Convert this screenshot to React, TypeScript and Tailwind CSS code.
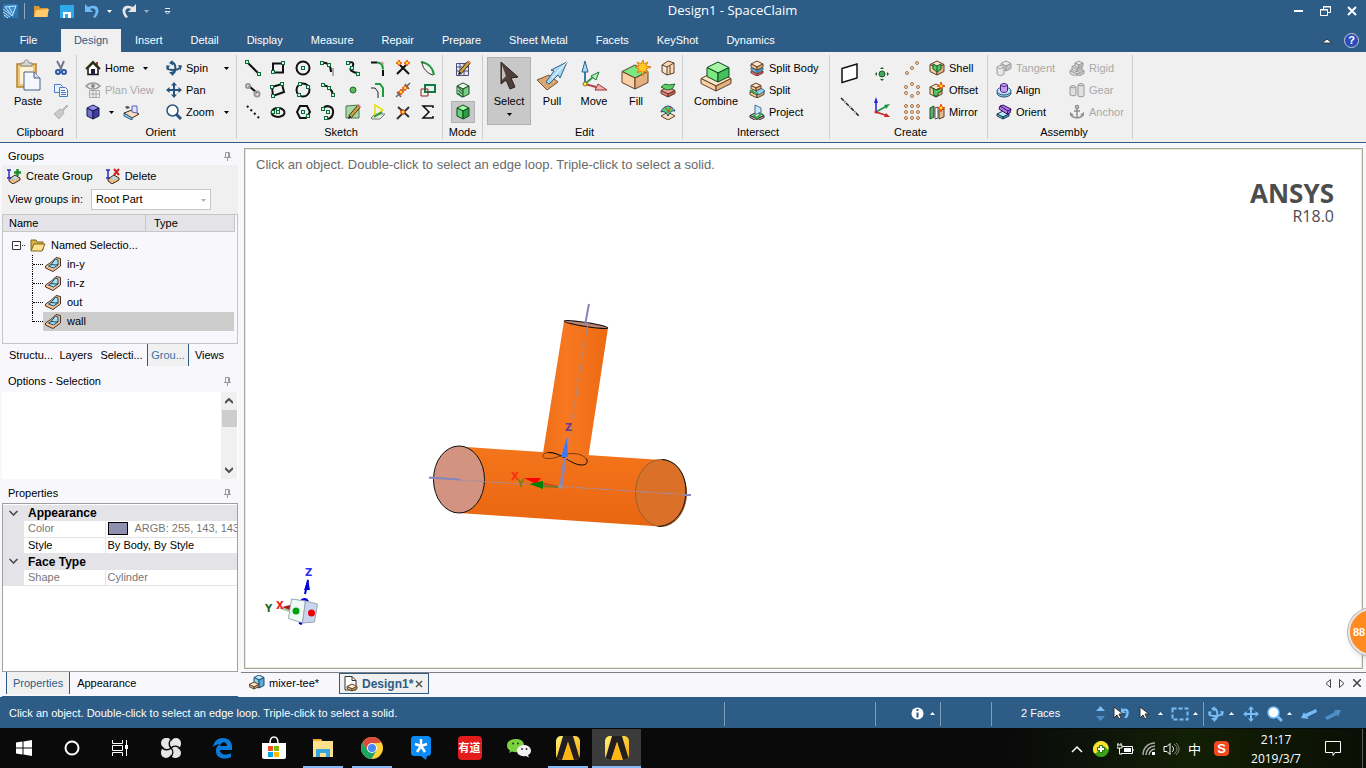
import React, { useState } from 'react';

interface ChildrenProps {
  children?: React.ReactNode;
}

interface SvgProps extends ChildrenProps {
  w?: number;
  h?: number;
  className?: string;
}

const Svg: React.FC<SvgProps> = ({ w = 16, h = 16, className = '', children }) => (
  <svg width={w} height={h} viewBox={`0 0 ${w} ${h}`} fill="none" className={`shrink-0 ${className}`} aria-hidden="true">
    {children}
  </svg>
);

interface CubeProps {
  x: number;
  y: number;
  a: number;
  h: number;
  top: string;
  left: string;
  right: string;
  line?: string;
}

// isometric block, a = half width
const Cube: React.FC<CubeProps> = ({ x, y, a, h, top, left, right, line = '#5b4029' }) => {
  const b = a / 2;
  return (
    <g stroke={line} strokeWidth="1" strokeLinejoin="round">
      <polygon fill={top} points={`${x + a},${y} ${x + 2 * a},${y + b} ${x + a},${y + 2 * b} ${x},${y + b}`} />
      <polygon fill={left} points={`${x},${y + b} ${x + a},${y + 2 * b} ${x + a},${y + 2 * b + h} ${x},${y + b + h}`} />
      <polygon fill={right} points={`${x + 2 * a},${y + b} ${x + a},${y + 2 * b} ${x + a},${y + 2 * b + h} ${x + 2 * a},${y + b + h}`} />
    </g>
  );
};

const tan = { top: '#fde3c6', left: '#fbd0a4', right: '#e3b07e' };
const green = { top: '#a6f5a6', left: '#7be883', right: '#43bf5c' };
const red = { top: '#f7a0a0', left: '#ef7c7c', right: '#cf5555' };
const blue = { top: '#bfe8fb', left: '#8fd0f0', right: '#5aa9d6' };
const grey = { top: '#eeeeee', left: '#dcdcdc', right: '#c4c4c4' };

const Caret: React.FC<{ up?: boolean; className?: string }> = ({ up, className = 'text-black' }) => (
  <svg width="5" height="3" viewBox="0 0 5 3" className={`shrink-0 ${className}`} aria-hidden="true">
    <path d={up ? 'M0 3h5L2.500 0z' : 'M0 0h5L2.500 3z'} fill="currentColor" />
  </svg>
);

const Pencil = () => (
  <g>
    <path d="M4 11.500 12.500 1.500l2.500 2-8.500 10z" fill="#c9a23f" stroke="#4a3714" strokeWidth="1" />
    <path d="m4 11.500 2.500 2L3 15z" fill="#222" />
    <path d="m12 1.500 1.500-1L16 2.500l-1 1.500z" fill="#d77" />
  </g>
);

const Spark: React.FC<{ x: number; y: number; r?: number }> = ({ x, y, r = 3 }) => (
  <g transform={`translate(${x} ${y})`}>
    <path d={`M0 ${-r}L1 -1L${r} 0L1 1L0 ${r}L-1 1L${-r} 0L-1 -1Z`} fill="#ffdf20" stroke="#ee4a10" strokeWidth="1" />
  </g>
);

const SpinIcon: React.FC<{ color?: string }> = ({ color = '#27547c' }) => (
  <Svg>
    <path d="M5 2.500c5-1 6 9 1.500 11.500M1 8c2 2.500 9 3 13 0" stroke={color} strokeWidth="2" />
    <path d="M6.500 0 3 3l4 2.500zM3 12.500l5-1.500-1 5zM0 5.500h4L1 10.500zM12 5l4 .5-1.500 5z" fill={color} />
  </Svg>
);

const PanIcon: React.FC<{ color?: string }> = ({ color = '#27547c' }) => (
  <Svg>
    <path d="M8 2v12M2 8h12" stroke={color} strokeWidth="2" />
    <path d="m8 0 3 3.500H5zM8 16l3-3.500H5zM0 8l3.500-3v6zM16 8l-3.500-3v6z" fill={color} />
  </Svg>
);

const ZoomIcon: React.FC<{ color?: string; fill?: string }> = ({ color = '#27547c', fill = '#fff' }) => (
  <Svg>
    <path d="m10 10 5 5" stroke={color} strokeWidth="3" />
    <circle cx="6.500" cy="6.500" r="5.500" fill={fill} stroke={color} strokeWidth="1.500" />
  </Svg>
);

const FacePlate = () => (
  <g strokeLinejoin="round">
    <path d="m.5 9 6-4L11 .5l4.500 1V9L8 14.500.5 11z" fill="#f0c296" stroke="#4a3423" />
    <path d="M6 7.500 10.500 2l2.500 1v5l-4.500 3L3.500 9z" fill="#a9e0f8" stroke="#1d4a63" />
    <path d="m6 7.500 5 .5 2-.5" stroke="#1d4a63" />
  </g>
);

const Pin = () => (
  <Svg w={9} h={9} className="text-[#9a9a9a]">
    <path d="M2.500.5h4v5h-4zM5.500.5v5M1 5.500h7M4.500 6v3" stroke="currentColor" />
  </Svg>
);

/* ---------- ribbon building blocks ---------- */

const RibbonGroup: React.FC<{ title: string; width: string; children: React.ReactNode }> = ({ title, width, children }) => (
  <section aria-label={title} className={`${width} my-[3px] flex shrink-0 flex-col border-r border-[#cdcdcd] pt-0.5`}>
    <div className="flex h-[68px]">{children}</div>
    <h2 className="text-center leading-[14px]">{title}</h2>
  </section>
);

interface CommandProps {
  icon: React.ReactNode;
  label: string;
  disabled?: boolean;
  menu?: boolean;
}

const Command: React.FC<CommandProps> = ({ icon, label, disabled, menu }) => (
  <button disabled={disabled} className="flex h-[22px] items-center gap-1 whitespace-nowrap text-left disabled:text-[#a9a9a9]">
    {icon}
    <span className={menu ? 'min-w-[34px]' : ''}>{label}</span>
    {menu && <Caret />}
  </button>
);

const IconButton: React.FC<{ label: string; className?: string; children: React.ReactNode }> = ({ label, className = 'h-[22px]', children }) => (
  <button aria-label={label} className={`flex items-center justify-center ${className}`}>{children}</button>
);

const BigCommand: React.FC<{ label: string; width?: string; active?: boolean; children: React.ReactNode }> = ({ label, width = 'w-[42px]', active, children }) => (
  <button className={`${width} flex h-[68px] flex-col items-center border pt-px ${active ? 'border-[#b0b0b0] bg-[#c8c8c8]' : 'border-transparent'}`}>
    <span className="flex h-[34px] items-center">{children}</span>
    <span className="leading-4">{label}</span>
    {active && <Caret className="mt-1 text-black" />}
  </button>
);

/* ---------- sketch tools ---------- */

interface SketchTool {
  name: string;
  d?: string;
  dots?: number[][];
  extra?: React.ReactNode;
}

const sketchTools: SketchTool[] = [
  { name: 'Line', d: 'M2 2l12 12', dots: [[2, 2], [14, 14]] },
  { name: 'Rectangle', d: 'M3 3.500h10v9H3z', dots: [[3, 12], [13, 3]] },
  { name: 'Circle', d: 'M8 1.500a6.500 6.500 0 1 1 0 13a6.500 6.500 0 1 1 0-13', dots: [[8, 8]] },
  { name: 'Tangent Arc', d: 'M2 3c6-1 9 3 9 9', dots: [[2, 3], [9, 5]], extra: <path d="M13 8v8" stroke="#aaa" strokeWidth="2" /> },
  { name: 'Spline', d: 'M3 3c8-3 5 4 3 5s1 5 8 5', dots: [[3, 3], [7, 8], [13, 14]] },
  { name: 'Create Rounded Corner', extra: <g strokeWidth="2"><path d="M1 2.500h6" stroke="#111" /><path d="M7 2.500c5 0 6 3 6 7" stroke="#1e9a3a" /><path d="M13 10v6" stroke="#111" /><path d="m11 2 3 2" stroke="#d9a0a0" /></g> },
  { name: 'Trim Away', d: 'M2 14l6-6 6 6M5 5l3 3 3-3', extra: <g><Spark x={4} y={3} /><Spark x={12} y={3} /></g> },
  { name: 'Project to Sketch', extra: <g><path d="M1 2c7 1 12 6 13 13" stroke="#1e9a3a" strokeWidth="2" /><path d="M2 2c0 6 6 12 11 13" stroke="#333" /></g> },
  { name: 'Tangent Line', d: 'M4 4l8 7', extra: <g stroke="#999" strokeWidth="2"><circle cx="3" cy="4" r="2" /><circle cx="12" cy="12" r="2.500" /></g> },
  { name: 'Three-Point Rectangle', d: 'M2 5l10-3 2 8-11 4z', dots: [[2, 5], [12, 2], [3, 14]] },
  { name: 'Three-Point Circle', d: 'M8 1.500a6.500 6.500 0 1 1 0 13a6.500 6.500 0 1 1 0-13', dots: [[5, 2], [13, 5], [4, 13]] },
  { name: 'Three-Point Arc', d: 'M3 3c6 1 9 5 10 10', dots: [[3, 3], [9, 6], [13, 13]] },
  { name: 'Point', extra: <circle cx="8" cy="8" r="3" fill="#5cb85c" stroke="#176b2a" /> },
  { name: 'Offset Curve', extra: <g><path d="M5 2h5l3 4v9" stroke="#1e9a3a" strokeWidth="2" /><path d="M1 6h4l3 4v6" stroke="#222" /></g> },
  { name: 'Split Curve', extra: <g><path d="m1 15 14-14M2 10l4 5M10 2l4 5" stroke="#666" strokeWidth="1.500" /><Spark x={6} y={10} /><Spark x={10} y={6} /></g> },
  { name: 'Scale', extra: <g><path d="M5 3h10v7H5z" stroke="#0f7a43" strokeWidth="2" /><path d="M1 7h7v7H1z" stroke="#8c2222" /></g> },
  { name: 'Construction Line', extra: <path d="m2 2 13 13" stroke="#111" strokeWidth="2" strokeDasharray="2 3" /> },
  { name: 'Ellipse', d: 'M8 4a6.500 4.500 0 1 1 0 9a6.500 4.500 0 1 1 0-9', dots: [[8, 8], [3, 8], [8, 5]] },
  { name: 'Polygon', d: 'M5 2h7l3 6-4 6H5L2 8z', dots: [[8, 8], [13, 12]] },
  { name: 'Sweep Arc', d: 'M3 5C6 0 14 2 13 9s-7 6-8 5', dots: [[3, 5], [8, 8], [6, 14]] },
  { name: 'Face Curve', extra: <g><path d="m1 2 13-1v13H1z" fill="#a8d8a8" stroke="#4d7a4d" /><Pencil /></g> },
  { name: 'Fold Sketch', extra: <g><path d="m1 14 4-4h10l-5 5H2z" fill="#e3f0e3" stroke="#777" /><path d="M5 1v11l8-6z" stroke="#e4e000" strokeWidth="1.500" /><path d="m4 13 8-5" stroke="#1e9a3a" strokeWidth="2" /></g> },
  { name: 'Create Corner', extra: <g><path d="m2 15 12-12M3 3l11 10" stroke="#333" strokeWidth="2" /><Spark x={8} y={8} /></g> },
  { name: 'Equations', d: 'M13 4V2H3l6 6-6 6h10v-2' },
];

const SketchIcon: React.FC<{ tool: SketchTool }> = ({ tool }) => (
  <Svg>
    {tool.d && <path d={tool.d} stroke="#111" strokeWidth={tool.name === 'Equations' ? 1.5 : 2} />}
    {tool.extra}
    {tool.dots?.map(([x, y]) => (
      <rect key={`${x}-${y}`} x={x - 1.5} y={y - 1.5} width="3" height="3" fill="#d6f5df" stroke="#0a6b3b" />
    ))}
  </Svg>
);

/* ---------- header ---------- */

const menuTabs = ['Insert', 'Detail', 'Display', 'Measure', 'Repair', 'Prepare', 'Sheet Metal', 'Facets', 'KeyShot', 'Dynamics'];

const Header = () => (
  <header className="h-[52px] shrink-0 bg-[#2d5c87] text-white">
    <div className="flex h-[22px] items-center">
      <div className="flex items-center pl-[3px]">
        <Svg w={17} h={16}>
          <path d="M0 1h15v14H0z" fill="#2f74ad" />
          <path d="M1 3c5-2 10-1 13-1l-4 13c-2-5-5-8-9-10z" fill="#3f8ccc" />
          <path d="m2 4 11-1-4 10zM6 4l3 6M0 9l7 5M1 12l4 3M0 6l8 6" stroke="#bfe4ff" />
        </Svg>
        <span className="ml-1 h-4 w-px bg-[#8fa9c0]" />
        <IconButton label="Open" className="ml-2">
          <Svg w={17}>
            <path d="M1 3h5l1 2h8v9H1z" fill="#d9962f" />
            <path d="m3 7 13-1-2 8H1z" fill="#ffcb6b" />
          </Svg>
        </IconButton>
        <IconButton label="Save" className="ml-[9px]">
          <Svg>
            <path d="M1 2h14v13H1z" fill="#2eaae8" />
            <path d="M4 9h8v6H4z" fill="#fff" />
            <path d="M6 11h3v4H6z" fill="#2eaae8" />
          </Svg>
        </IconButton>
        <IconButton label="Undo" className="ml-[9px]">
          <Svg>
            <path d="M1 1v8h8L6 6c4-2 7 1 5 5l-2 3 2 1c6-6 4-14-4-12L4 4z" fill="#6fbaf5" />
          </Svg>
        </IconButton>
        <Caret className="ml-[7px] text-white" />
        <IconButton label="Redo" className="ml-[9px]">
          <Svg>
            <path d="M15 1v8H7l3-3C6 4 3 7 5 11l2 3-2 1C-1 9 1 1 9 3l3 1z" fill="#e6e6e6" />
          </Svg>
        </IconButton>
        <Caret className="ml-[7px] text-[#9db2c6]" />
        <Svg w={7} h={7} className="ml-[15px]">
          <path d="M1 .5h5M1 3.500h5L3.500 6z" stroke="#dfe7ee" />
        </Svg>
      </div>
      <h1 className="flex-1 text-center font-['Open_Sans',sans-serif] text-[13px]">Design1 - SpaceClaim</h1>
      <div className="flex items-center justify-end gap-4 pr-[9px]">
        <IconButton label="Minimize"><Svg w={10} h={12}><path d="M0 6h9" stroke="#fff" strokeWidth="2" /></Svg></IconButton>
        <IconButton label="Restore"><Svg w={11} h={12}><path d="M.5 4.500h7v6h-7zM3.500 4V1.500h7v6H8" stroke="#fff" /><path d="M0 5h8M3 2h8" stroke="#fff" /></Svg></IconButton>
        <IconButton label="Close"><Svg w={10} h={10}><path d="m1 1 8 8M9 1 1 9" stroke="#fff" strokeWidth="2" /></Svg></IconButton>
      </div>
    </div>
    <nav className="mt-[7px] flex h-[23px] items-center">
      <button className="h-full w-[61px] pr-1 text-center">File</button>
      <button className="h-full w-[60px] bg-[#f0f0f0] text-[#2d5c87]">Design</button>
      {menuTabs.map(tab => (
        <button key={tab} className="h-full px-[14px]">{tab}</button>
      ))}
      <IconButton label="Collapse ribbon" className="ml-auto">
        <Svg w={10} h={6}><path d="m0 5 5-4 5 4z" fill="#fff" stroke="#333" /></Svg>
      </IconButton>
      <IconButton label="Help" className="ml-3 mr-[7px]">
        <span className="flex size-[15px] items-center justify-center rounded-full border border-[#c7ccd6] bg-[#2b4cb8] text-[11px] font-bold leading-none">?</span>
      </IconButton>
    </nav>
  </header>
);

/* ---------- ribbon ---------- */

const Ribbon = () => (
  <div className="flex h-[91px] shrink-0 overflow-hidden border-b border-[#2d5c87] bg-[#f0f0f0]">
    <RibbonGroup title="Clipboard" width="w-[77px] pl-1">
      <BigCommand label="Paste" width="w-12">
        <Svg w={28} h={34}>
          <path d="M3 5h19v23H3z" fill="#f0c777" stroke="#b3832f" strokeWidth="1.500" />
          <path d="M6 8h13v17H6z" fill="#fff2d2" />
          <path d="M7 7V4h3c0-4 5-4 5 0h3v3z" fill="#d6d6d6" stroke="#888" />
          <path d="M9 13h10l6 6v12H9z" fill="#f4f7fd" stroke="#4a5f8a" transform="translate(1 0)" />
          <path d="M20 13v6h6" fill="#cfdcf2" stroke="#4a5f8a" />
        </Svg>
      </BigCommand>
      <div className="flex w-[18px] flex-col">
        <IconButton label="Cut">
          <Svg>
            <path d="m4 1 5 9M11 1 7 10" stroke="#6f7a8c" strokeWidth="2" />
            <circle cx="5" cy="12" r="2" stroke="#2857a8" strokeWidth="2" />
            <circle cx="11" cy="12" r="2" stroke="#2857a8" strokeWidth="2" />
          </Svg>
        </IconButton>
        <IconButton label="Copy">
          <Svg>
            <path d="M1.500 2.500h6l2 2v6h-8z" fill="#eaf2ff" stroke="#4a79c9" />
            <path d="M6.500 5.500h6l2 2v7h-8zM8 8.500h4M8 10.500h5M8 12.500h5" fill="#eaf2ff" stroke="#4a79c9" />
          </Svg>
        </IconButton>
        <IconButton label="Format painter">
          <Svg><path d="m14 1-5 5-2-1-6 5 5 5 5-6-1-2 5-5z" fill="#c9c9c9" stroke="#b2b2b2" /></Svg>
        </IconButton>
      </div>
    </RibbonGroup>

    <RibbonGroup title="Orient" width="w-[160px] pl-2">
      <div className="w-[81px]">
        <Command menu label="Home" icon={
          <Svg>
            <path d="M11 2h2v4h-2z" fill="#a33" />
            <path d="M3 8v6.500h10V8L8 3z" fill="#fff" stroke="#111" strokeWidth="1.500" />
            <path d="m1 9 7-7 7 7" stroke="#332f10" strokeWidth="2" />
            <path d="M6 9h4v6H6z" fill="#20203a" />
          </Svg>
        } />
        <Command disabled label="Plan View" icon={
          <Svg>
            <path d="M1 4c4-4 10-4 14 0-4 4-10 4-14 0z" stroke="#999" strokeWidth="1.500" />
            <circle cx="8" cy="4" r="2" fill="#888" />
            <path d="M4.500 8.500h10v7h-10zM8 8v7M11 8v7M4 12h10" stroke="#aaa" />
          </Svg>
        } />
        <div className="flex h-[22px] items-center">
          <IconButton label="View mode"><Svg><Cube x={2} y={1} a={6} h={8} top="#8f8fe8" left="#7070d0" right="#3e3e9c" line="#1a1a4a" /></Svg></IconButton>
          <Caret className="ml-2 text-black" />
          <IconButton label="Snap view" className="ml-2">
            <Svg w={18}>
              <path d="m2 9 8-3 7 4-7 4z" fill="#fbdcb8" stroke="#3b2a1a" />
              <path d="m2 9 8 5v2l-8-4z" fill="#8fd0f0" stroke="#2c5b78" />
              <path d="M10 2h5v7l-5-1z" fill="#dfe2ff" stroke="#5a60c0" />
              <path d="M3 3c2-2 4-1 5 1l-3 1z" fill="#555" />
            </Svg>
          </IconButton>
        </div>
      </div>
      <div>
        <Command menu label="Spin" icon={<SpinIcon />} />
        <Command label="Pan" icon={<PanIcon />} />
        <Command menu label="Zoom" icon={<ZoomIcon />} />
      </div>
    </RibbonGroup>

    <RibbonGroup title="Sketch" width="w-[206px] pl-[3px]">
      <div className="grid h-[66px] w-[200px] grid-cols-8">
        {sketchTools.map(tool => (
          <IconButton key={tool.name} label={tool.name}><SketchIcon tool={tool} /></IconButton>
        ))}
      </div>
    </RibbonGroup>

    <RibbonGroup title="Mode" width="w-10">
      <div className="flex w-full flex-col items-center">
        <IconButton label="Sketch mode">
          <Svg>
            <path d="M1.500 3.500h12v12h-12zM5 3v12M9 3v12M1 7h12M1 11h12" fill="#e8e8f4" stroke="#4c4c78" />
            <Pencil />
          </Svg>
        </IconButton>
        <IconButton label="Section mode">
          <Svg>
            <Cube x={2} y={1} a={6} h={8} top="#eafbea" left="#f7fff7" right="#7ccf86" line="#1a4d24" />
            <path d="m3 8 4 4M3 11l4 4M3 5l5 5" stroke="#1d7a30" strokeWidth="1.500" />
          </Svg>
        </IconButton>
        <IconButton label="3D mode" className="h-[22px] w-6 border border-[#b0b0b0] bg-[#c8c8c8]">
          <Svg><Cube x={2} y={1} a={6} h={8} top="#a6f5a6" left="#62d672" right="#2f9c48" line="#0e4a1c" /></Svg>
        </IconButton>
      </div>
    </RibbonGroup>

    <RibbonGroup title="Edit" width="w-[200px] pl-1">
      <BigCommand active label="Select" width="w-11">
        <Svg w={28} h={32}>
          <path d="M6 2v22l5-4 4 9 5-2-4-9 7-1z" fill="#4e403a" stroke="#2a1f1b" />
          <path d="M7 5v15l4-4z" fill="#c9bdb8" />
        </Svg>
      </BigCommand>
      <BigCommand label="Pull">
        <Svg w={32} h={32}>
          <path d="m1 20 12-5 9 7-11 8z" fill="#d9a673" stroke="#7a5430" />
          <path d="m10 22 8-11-3-1L31 2l-7 16-2-3-9 9z" fill="#a9d8f5" stroke="#2f6288" />
          <path d="M31 2 16 18" stroke="#fff" />
        </Svg>
      </BigCommand>
      <BigCommand label="Move">
        <Svg w={28} h={32}>
          <path d="M5 24V8" stroke="#3c7aa6" strokeWidth="2" />
          <path d="m5 1 3 11H2z" fill="#a9d8f5" stroke="#2f6288" />
          <path d="m5 24 8-7" stroke="#2f9c48" strokeWidth="2" />
          <path d="m19 12-3 8-5-4z" fill="#b4f0bb" stroke="#1f7a35" />
          <path d="m5 24 11 3" stroke="#b04444" strokeWidth="2" />
          <path d="m27 30-12 0 3-6z" fill="#f3b0b0" stroke="#963131" />
          <circle cx="5" cy="24" r="2" fill="#ffe667" stroke="#8a7612" />
        </Svg>
      </BigCommand>
      <BigCommand label="Fill">
        <Svg w={30} h={32}>
          <Cube x={1} y={5} a={13} h={11} {...tan} top="#7be883" />
          <path d="m22 0 1 4 4-2-2 4 5 1-5 2 2 4-4-2-1 5-2-5-4 2 2-4-4-2 4-1-2-4 4 2z" fill="#ffc928" stroke="#e07b10" />
        </Svg>
      </BigCommand>
      <div className="flex w-[22px] flex-col items-center">
        <IconButton label="Blend"><Svg><path d="m2 5 6-4 6 2v10l-7 2-5-3zM7 15V7L2 5M7 7l7-4M10 6v8" fill="#f9d9b4" stroke="#5b4029" /></Svg></IconButton>
        <IconButton label="Replace"><Svg><Cube x={1} y={5} a={7} h={3} {...red} /><path d="m1 5 4-3 4 1 6-1-3 5-5 1z" fill="#5fcf6c" stroke="#1f6b2c" /></Svg></IconButton>
        <IconButton label="Tweak"><Svg><path d="m1 12 7-4 7 4-7 4z" fill="#fbdcb8" stroke="#5b4029" /><path d="M1 8c2-6 9-9 14-1-4-1-5 2-7 5-2-4-4-5-7-4z" fill="#5fcf6c" stroke="#173d8c" /><path d="m5 4 5 4M11 3 7 9" stroke="#c33" /></Svg></IconButton>
      </div>
    </RibbonGroup>

    <RibbonGroup title="Intersect" width="w-[147px] pl-1">
      <BigCommand label="Combine" width="w-[58px]">
        <Svg w={32} h={32}>
          <Cube x={1} y={11} a={15} h={5} {...tan} />
          <Cube x={7} y={2} a={11} h={9} {...green} line="#10461c" />
        </Svg>
      </BigCommand>
      <div className="ml-1">
        <Command label="Split Body" icon={<Svg><Cube x={2} y={8} a={6} h={2} {...red} line="#8c3a3a" /><Cube x={2} y={5} a={6} h={2} {...blue} line="#3a7a9c" /><Cube x={2} y={1} a={6} h={3} {...tan} /></Svg>} />
        <Command label="Split" icon={<Svg><Cube x={1} y={6} a={7} h={3} {...tan} /><path d="m7 9 5-3 4 3-6 4z" fill="#8fd0f0" stroke="#2f6288" /><Cube x={2} y={1} a={5} h={3} {...tan} /><path d="m1 8 7 4" stroke="#23b14d" strokeWidth="2" /></Svg>} />
        <Command label="Project" icon={<Svg><Cube x={1} y={8} a={7} h={2} {...tan} line="#1c2440" /><path d="M6 1v10l6-3V4z" fill="#cfe7f7" stroke="#3a6ea0" /><path d="m4 11 4 3 5-5" stroke="#23b14d" strokeWidth="2" /></Svg>} />
      </div>
    </RibbonGroup>

    <RibbonGroup title="Create" width="w-[158px] pl-1">
      <div className="flex w-8 flex-col items-center">
        <IconButton label="Plane" className="h-[34px]"><Svg w={20} h={22}><path d="M2 5.500 17 1v14L2 19.500z" fill="#fff" stroke="#111" strokeWidth="1.500" /></Svg></IconButton>
        <IconButton label="Axis" className="h-8"><Svg w={20} h={20}><path d="m1 1 18 18" stroke="#222" strokeWidth="1.500" strokeDasharray="4 1 1 1" /></Svg></IconButton>
      </div>
      <div className="flex w-8 flex-col items-center">
        <IconButton label="Point" className="h-[34px]"><Svg><circle cx="8" cy="8" r="3" fill="#4ca35c" stroke="#195b28" /><path d="m8 1 2 2H6zM8 15l2-2H6zM1 8l2-2v4zM15 8l-2-2v4z" fill="#195b28" /></Svg></IconButton>
        <IconButton label="Origin" className="h-8">
          <Svg w={18} h={20}>
            <path d="M3 15V4" stroke="#2222dd" strokeWidth="1.500" /><path d="m3 0 2 6H1z" fill="#2222dd" />
            <path d="m3 15 9-5" stroke="#1d9148" strokeWidth="1.500" /><path d="m17 7-4 5-2-4z" fill="#1d9148" />
            <path d="m3 15 9 3" stroke="#c72525" strokeWidth="1.500" /><path d="m17 20-6 0 2-4z" fill="#c72525" />
            <circle cx="3" cy="15" r="1.500" fill="#c72525" />
          </Svg>
        </IconButton>
      </div>
      <div className="flex w-[27px] flex-col items-center">
        <IconButton label="Linear pattern"><Svg><g fill="#fbdcb8" stroke="#a5714a"><circle cx="3" cy="13" r="1.500" /><circle cx="8" cy="8" r="1.500" /><circle cx="13" cy="3" r="1.500" /></g></Svg></IconButton>
        <IconButton label="Circular pattern"><Svg><g fill="#fbdcb8" stroke="#a5714a"><circle cx="8" cy="2" r="1.500" /><circle cx="14" cy="5" r="1.500" /><circle cx="14" cy="11" r="1.500" /><circle cx="8" cy="14" r="1.500" /><circle cx="2" cy="11" r="1.500" /><circle cx="2" cy="5" r="1.500" /></g></Svg></IconButton>
        <IconButton label="Fill pattern">
          <Svg>
            <g fill="#fbdcb8" stroke="#a5714a">
              {[2, 8, 14].map(x => [2, 8, 14].map(y => <circle key={`${x}-${y}`} cx={x} cy={y} r="1.500" />))}
            </g>
          </Svg>
        </IconButton>
      </div>
      <div className="ml-1">
        <Command label="Shell" icon={<Svg><Cube x={1} y={1} a={7} h={7} {...tan} /><path d="m4 4 4 2 4-2v5l-4 3-4-3z" fill="#56c765" stroke="#155a24" /><path d="M8 6v6" stroke="#155a24" /></Svg>} />
        <Command label="Offset" icon={<Svg><Cube x={1} y={2} a={6} h={7} {...tan} /><path d="m4 6 3 2 6-2v3l-4 2v3H5z" fill="#56c765" stroke="#155a24" /><Spark x={12} y={4} r={4} /></Svg>} />
        <Command label="Mirror" icon={<Svg><path d="m1 4 4-2v11l-4 2z" fill="#5fae6b" stroke="#1c4d27" /><path d="m6 4 3-1v11l-3 1z" fill="#fff" stroke="#555" /><path d="m10 6 5-1v8l-5 2z" fill="#e5b88a" stroke="#5b4029" /><Spark x={12} y={4} r={4} /></Svg>} />
      </div>
    </RibbonGroup>

    <RibbonGroup title="Assembly" width="w-[145px] pl-2">
      <div className="w-[73px]">
        <Command disabled label="Tangent" icon={<Svg><Cube x={5} y={1} a={5} h={5} {...grey} line="#9a9a9a" /><path d="M1 7v7c2 2 5 2 7 0V7c-2-2-5-2-7 0zM1 7c2 2 5 2 7 0" fill="#e6e6e6" stroke="#9a9a9a" /></Svg>} />
        <Command label="Align" icon={<Svg><ellipse cx="8" cy="11" rx="7" ry="4" fill="#9fd6f2" stroke="#1f4f70" /><ellipse cx="8" cy="9" rx="7" ry="4" fill="#bfe8fb" stroke="#1f4f70" /><path d="M4.500 3v6c2 2 5 2 7 0V3c-2-2-5-2-7 0zM4.500 3c2 2 5 2 7 0" fill="#c79cf0" stroke="#4b2180" /></Svg>} />
        <Command label="Orient" icon={<Svg><Cube x={1} y={7} a={6} h={2} {...blue} line="#16394f" /><path d="m4 2 3-1 8 4-1 4-3 1-8-5z" fill="#b07ae6" stroke="#32105c" /><path d="m4 2 8 5 3-2M12 7l-1 3" stroke="#32105c" /></Svg>} />
      </div>
      <div>
        <Command disabled label="Rigid" icon={<Svg><Cube x={1} y={7} a={7} h={3} {...grey} line="#999" /><Cube x={3} y={4} a={5} h={3} {...grey} line="#999" /><Cube x={6} y={1} a={4} h={3} {...grey} line="#999" /></Svg>} />
        <Command disabled label="Gear" icon={<Svg><path d="M1 5v8c1 1 5 1 6 0V5c-1-2-5-2-6 0zM1 5c1 1 5 1 6 0M9 3v11c1 1 5 1 6 0V3c-1-2-5-2-6 0zM9 3c1 1 5 1 6 0" fill="#e0e0e0" stroke="#999" /></Svg>} />
        <Command disabled label="Anchor" icon={<Svg><circle cx="8" cy="3" r="1.500" stroke="#8f8f8f" strokeWidth="1.500" /><path d="M8 5v9M5 7h6M2 10c1 5 11 5 12 0" stroke="#8f8f8f" strokeWidth="1.500" /><path d="m1 8 4 3-4 1zM15 8l-4 3 4 1z" fill="#8f8f8f" /></Svg>} />
      </div>
    </RibbonGroup>
  </div>
);

/* ---------- side panels ---------- */

const PanelTitle: React.FC<{ title: string; className?: string }> = ({ title, className = 'h-5' }) => (
  <div className={`${className} flex items-center justify-between pl-1.5 pr-1.5`}>
    <h2>{title}</h2>
    <Pin />
  </div>
);

const GroupIcon: React.FC<{ mark: React.ReactNode }> = ({ mark }) => (
  <Svg>
    <path d="m3 11 6-4 5 3v2l-7 4-4-3z" fill="#e8b98a" stroke="#3d2b1c" />
    <path d="m6 10 3-2 3 2-3 2z" fill="#a9e0f8" />
    <path d="M1 2h4M3 2v8M1 10h4" stroke="#2a2ac0" strokeWidth="1.500" />
    {mark}
  </Svg>
);

const treeItems = ['in-y', 'in-z', 'out', 'wall'];
const panelTabs = ['Structu...', 'Layers', 'Selecti...', 'Grou...', 'Views'];
const panelTabWidths = ['w-[50px]', 'w-10', 'w-[51px]', 'w-[42px]', 'w-[41px]'];

const GroupsPanel = () => {
  const [selected, setSelected] = useState('wall');

  return (
    <section className="pt-1">
      <PanelTitle title="Groups" className="h-[18px]" />
      <div className="h-[49px] bg-[#f0f0f0] pl-1">
        <div className="flex h-[22px] items-center gap-3">
          <button className="flex items-center gap-1">
            <GroupIcon mark={<path d="M11.500 1v7M8 4.500h7" stroke="#1f8a2d" strokeWidth="2.500" />} />
            Create Group
          </button>
          <button className="flex items-center gap-1">
            <GroupIcon mark={<path d="m9 1 5 6M14 1 9 7" stroke="#d02020" strokeWidth="2" />} />
            Delete
          </button>
        </div>
        <div className="flex items-center pl-0.5 pt-0.5">
          <label htmlFor="group-root" className="w-[83px]">View groups in:</label>
          <span className="relative">
            <select id="group-root" className="h-[21px] w-[120px] appearance-none border border-[#c6c6c6] bg-white pl-1 pr-5">
              <option>Root Part</option>
            </select>
            <span className="pointer-events-none absolute right-[5px] top-[10px]"><Caret className="text-[#b5b5b5]" /></span>
          </span>
        </div>
      </div>

      <div className="h-[130px] border border-[#c6c6c6]">
        <div className="mr-0.5 flex h-[17px] items-center border-b border-r border-[#c6c6c6] bg-[#e3e3e8]">
          <span className="w-[143px] border-r border-[#c6c6c6] pl-1.5 leading-4">Name</span>
          <span className="pl-2">Type</span>
        </div>
        <div className="pt-[3px]">
          <div className="flex h-5 items-center pl-[9px]">
            <Svg w={18} h={11}>
              <path d="M.5 1.500h8v8h-8zM2.500 5.500h4" fill="#fff" stroke="#333" />
              <path d="M10 5.500h4" stroke="#333" strokeDasharray="1 1" />
            </Svg>
            <Svg w={16} h={14}>
              <path d="M1 2h5l1 2h6v8H1z" fill="#d8b04a" stroke="#86651c" />
              <path d="m4 6h11l-3 7H1z" fill="#fae28f" stroke="#86651c" />
            </Svg>
            <span className="ml-[5px]">Named Selectio...</span>
          </div>
          <ul className="ml-[29px]">
            {treeItems.map((item, i) => (
              <li key={item} className="flex h-[19px]">
                <span className="flex w-[11px] shrink-0 items-center">
                  <span className={`border-l border-dotted border-black ${i === treeItems.length - 1 ? 'mb-auto h-[10px]' : 'h-full'}`} />
                  <span className="w-full border-t border-dotted border-black" />
                </span>
                <button
                  onClick={() => setSelected(item)}
                  className={`mr-[3px] flex flex-1 items-center gap-[6px] pl-0.5 text-left ${selected === item ? 'bg-[#cccccc]' : ''}`}
                >
                  <Svg><FacePlate /></Svg>
                  {item}
                </button>
              </li>
            ))}
          </ul>
        </div>
      </div>

      <div className="flex h-[22px] items-stretch pl-1">
        {panelTabs.map((tab, i) => (
          <button
            key={tab}
            className={`${panelTabWidths[i]} ${tab === 'Grou...' ? 'border-x border-[#2d5c87] bg-[#f0f0f0] text-[#3b73a6]' : ''}`}
          >
            {tab}
          </button>
        ))}
      </div>
    </section>
  );
};

const OptionsPanel = () => (
  <section className="mt-[5px]">
    <PanelTitle title="Options - Selection" className="h-[21px]" />
    <div className="flex h-[87px] justify-end bg-white pr-px">
      <div className="flex w-4 flex-col items-center bg-[#f0f0f0]">
        <IconButton label="Scroll up" className="h-[18px]"><Svg w={8} h={6}><path d="m0 5 4-4 4 4" stroke="#505050" strokeWidth="2" /></Svg></IconButton>
        <span className="h-[17px] w-[15px] bg-[#cdcdcd]" />
        <IconButton label="Scroll down" className="mt-auto h-[18px]"><Svg w={8} h={6}><path d="m0 1 4 4 4-4" stroke="#505050" strokeWidth="2" /></Svg></IconButton>
      </div>
    </div>
  </section>
);

const SectionRow: React.FC<{ label: string }> = ({ label }) => (
  <tr className="h-4 bg-[#e3e3e8]">
    <td className="p-0"><Svg w={9} h={6} className="mx-auto"><path d="m.5 1 4 4 4-4" stroke="#444" strokeWidth="1.500" /></Svg></td>
    <th colSpan={2} className="p-0 pl-1 text-left text-xs font-bold leading-4">{label}</th>
  </tr>
);

interface PropertyRowProps extends ChildrenProps {
  label: string;
  readOnly?: boolean;
}

const PropertyRow: React.FC<PropertyRowProps> = ({ label, readOnly, children }) => (
  <tr className={`h-4 leading-[15px] ${readOnly ? 'text-[#777]' : ''}`}>
    <td className="bg-[#e3e3e8] p-0" />
    <th className="border-b border-r border-[#e3e3e8] p-0 pl-1 text-left font-normal">{label}</th>
    <td className="overflow-hidden whitespace-nowrap border-b border-[#e3e3e8] p-0 pl-0.5">{children}</td>
  </tr>
);

const PropertiesPanel = () => (
  <section className="mt-1 flex flex-1 flex-col">
    <PanelTitle title="Properties" />
    <div className="flex-1 border border-[#a0a0a0] bg-white pt-px">
      <table className="w-full table-fixed border-collapse">
        <colgroup>
          <col className="w-[21px]" />
          <col className="w-[81px]" />
          <col />
        </colgroup>
        <tbody>
          <SectionRow label="Appearance" />
          <PropertyRow label="Color" readOnly>
            <span className="flex items-center">
              <span className="mr-[7px] h-[13px] w-5 shrink-0 border border-black bg-[#8f8faf]" />ARGB: 255, 143, 143
            </span>
          </PropertyRow>
          <PropertyRow label="Style">By Body, By Style</PropertyRow>
          <SectionRow label="Face Type" />
          <PropertyRow label="Shape" readOnly>Cylinder</PropertyRow>
        </tbody>
      </table>
    </div>
    <div className="flex h-[25px] items-stretch border-b border-[#2d5c87] pb-0.5 pl-1">
      <button className="border-x border-[#2d5c87] bg-[#f0f0f0] px-1.5 text-[#2d5c87]">Properties</button>
      <button className="px-[7px]">Appearance</button>
    </div>
  </section>
);

/* ---------- 3D view ---------- */

const TeeModel = () => (
  <svg className="absolute left-[180px] top-[151px]" width="270" height="235" viewBox="425 300 270 235" fill="none" aria-label="Mixing tee">
    <defs>
      <linearGradient id="branch" x1="0" x2="1" y1="0" y2="0">
        <stop offset="0" stopColor="#ef6f17" />
        <stop offset="0.35" stopColor="#f87822" />
        <stop offset="1" stopColor="#ec6a12" />
      </linearGradient>
      <linearGradient id="pipe" x1="0" x2="0" y1="0" y2="1">
        <stop offset="0" stopColor="#f4751c" />
        <stop offset="1" stopColor="#e96611" />
      </linearGradient>
    </defs>
    <path d="m459 446.500 203 13.500c16 0 24 16 24 32s-9 34-26 34.500l-201-13.500z" fill="url(#pipe)" />
    <path d="m564 321 44 7-20 131-2 6-43-12z" fill="url(#branch)" />
    <ellipse cx="459" cy="479.500" rx="25.500" ry="33.500" fill="#d39381" stroke="#111" />
    <ellipse cx="661" cy="493" rx="25.500" ry="33.500" fill="#db7028" stroke="#96602f" />
    <path d="M662 459.500c33 2 32 65-4 67" stroke="#111" />
    <ellipse cx="586" cy="324.500" rx="22" ry="2" transform="rotate(9 586 324.500)" fill="#c08572" stroke="#111" />
    <path d="M562 457c-7-5-17-6-19-2s8 5 17 1c12-5 24-2 27 4" stroke="#7a3c12" />
    <path d="M548 452.500c13-1 23 13 34 12.500 5 0 6-3 4.500-6" stroke="#111" />
    <path d="m429 478 262 17" stroke="#a58c9c" strokeWidth="1" strokeDasharray="14 2 3 2" />
    <path d="m429 477.500 31 2M684 495h7" stroke="#8585c0" strokeWidth="2" />
    <path d="m588 322-27 165" stroke="#a58c8c" strokeDasharray="14 2 3 2" />
    <path d="m589 304-4 21" stroke="#8585c0" strokeWidth="2" />
    <path d="m561 486 4-28" stroke="#8a85b8" strokeWidth="3" />
    <path d="m567 437-6 20h7z" fill="#3f78f5" />
    <path d="m559 487-22-5" stroke="#d94420" strokeWidth="2" />
    <path d="m524 478 17 0-5 6z" fill="#f00" />
    <path d="m559 487-18-1" stroke="#777a20" strokeWidth="2" />
    <path d="m529 484 14-3v8z" fill="#00820a" />
    <circle cx="560" cy="487" r="2" fill="#8b9b9b" />
    <g className="font-['DejaVu_Sans',sans-serif] text-[10px] font-bold">
      <text x="511" y="480" fill="#ff3010">X</text>
      <text x="517" y="487" fill="#7f7f10">Y</text>
      <text x="565" y="431" fill="#6b3a8a">Z</text>
    </g>
  </svg>
);

const Triad = () => (
  <svg className="absolute bottom-[39px] left-[15px]" width="64" height="64" viewBox="260 564 64 64" fill="none" aria-label="View orientation">
    <path d="m305 593 3-14" stroke="#0000e6" strokeWidth="2" />
    <path d="m308 578 2 11h-6z" fill="#0000e6" />
    <path d="m300 600c2-4 8-4 9 1z" fill="#0000e6" />
    <path d="m277 607 12 4v-5z" fill="#a9c8a4" />
    <path d="m282 606 8-2v5z" fill="#b01515" />
    <path d="m291.500 598 14 2-3 22-14-4.500z" fill="#effaf7" stroke="#9aa6b5" />
    <path d="m305.500 600 12 3-3 18-12 1z" fill="#c8d4f0" stroke="#9aa6b5" />
    <path d="m299 622 3 1" stroke="#0000e6" strokeWidth="2" />
    <circle cx="296" cy="610" r="3.500" fill="#00a010" />
    <circle cx="311.500" cy="612" r="3.500" fill="#ee0000" />
    <g className="font-['DejaVu_Sans',sans-serif] text-[10px] font-bold">
      <text x="305" y="575" fill="#3030ee">Z</text>
      <text x="265" y="611" fill="#1f6b2c">Y</text>
      <text x="276" y="608" fill="#ee2222">X</text>
    </g>
  </svg>
);

const Viewport = () => (
  <main className="flex min-w-0 flex-1 flex-col pt-[5px]">
    <div className="relative mx-[3px] flex-1 overflow-hidden border border-[#aca899] bg-white shadow-[inset_0_0_0_1px_#ece9d8]">
      <p className="pl-[11px] pt-2 text-[13px] leading-4 text-[#6a6a6a]">
        Click an object. Double-click to select an edge loop. Triple-click to select a solid.
      </p>
      <div className="absolute right-7 top-7 text-right font-['Open_Sans',sans-serif] text-[#4d4d4d]">
        <div className="text-[26px] font-bold leading-8">ANSYS</div>
        <div className="text-[16px] leading-[14px]">R18.0</div>
      </div>
      <TeeModel />
      <Triad />
    </div>
    <div className="mt-[3px] flex h-[25px] items-start border-t border-[#808080]">
      <button className="flex h-5 w-[98px] items-center gap-1 pl-2">
        <Svg><Cube x={5} y={0} a={5} h={8} {...blue} line="#1f4f70" /><Cube x={0} y={7} a={5} h={2} {...tan} /></Svg>
        mixer-tee*
      </button>
      <div className="flex h-[21px] w-[90px] items-center border border-[#2d5c87] bg-[#f0f0f0] pl-[3px]">
        <button className="flex items-center gap-[3px] text-xs font-bold text-[#2d5c87]">
          <Svg><path d="M2 .5h7l4 4V14H2z" fill="#fff" stroke="#333" /><path d="M9 .5v4h4" stroke="#333" /><Cube x={4} y={8} a={5} h={2} {...tan} /></Svg>
          Design1*
        </button>
        <IconButton label="Close tab" className="ml-0.5"><Svg w={8} h={8}><path d="m1 1 6 6M7 1 1 7" stroke="#555" strokeWidth="1.500" /></Svg></IconButton>
      </div>
      <div className="ml-auto flex h-5 items-center gap-2 pr-[5px] text-[#444]">
        <IconButton label="Previous tab"><Svg w={6} h={9}><path d="m5.500.5v8l-4.500-4z" stroke="currentColor" /></Svg></IconButton>
        <IconButton label="Next tab"><Svg w={6} h={9}><path d="m.5.5v8l4.500-4z" stroke="currentColor" /></Svg></IconButton>
        <IconButton label="Close document"><Svg w={8} h={8}><path d="m0 0 8 8M8 0 0 8" stroke="currentColor" strokeWidth="1.500" /></Svg></IconButton>
      </div>
    </div>
  </main>
);

/* ---------- status bar ---------- */

const SmallCursor = () => <path d="M1 1v11l3-3 2 4 2-1-2-4h4z" fill="#fff" stroke="#333" />;

const StatusBar = () => (
  <footer className="flex h-[31px] shrink-0 items-center bg-[#2d5c87] pt-0.5 text-white">
    <p className="flex h-6 min-w-0 flex-1 items-center whitespace-nowrap border-r border-[#7f9cb6] pl-[9px]">
      Click an object. Double-click to select an edge loop. Triple-click to select a solid.
    </p>
    <div className="h-6 w-[151px] border-r border-[#7f9cb6]" />
    <div className="flex h-6 w-[65px] items-center justify-end gap-1.5 border-r border-[#7f9cb6] pr-[5px]">
      <Svg w={13} h={13}><circle cx="6.500" cy="6.500" r="6" fill="#fff" /><path d="M6.500 2v2M6.500 5.500v5" stroke="#2d5c87" strokeWidth="2" /></Svg>
      <Caret up className="text-white" />
    </div>
    <div className="h-6 w-[51px] border-r border-[#7f9cb6]" />
    <div className="flex h-6 w-[374px] items-center pl-[29px]">
      <span className="w-[75px]">2 Faces</span>
      <Svg w={9} h={17}><path d="M0 6h9L4.500 1z" fill="#79bdf7" /><path d="M0 11h9l-4.500 5z" fill="#4d8bc0" /></Svg>
      <IconButton label="Revert selection" className="ml-2"><Svg w={17}><path d="m8 1 0 6h5l-2-2c3-1 3 3 0 7h3c4-7 1-11-5-9z" fill="#79bdf7" /><SmallCursor /></Svg></IconButton>
      <IconButton label="Selection filter" className="ml-[9px]"><Svg w={12}><SmallCursor /></Svg></IconButton>
      <Caret up className="ml-[7px] text-white" />
      <IconButton label="Box selection" className="ml-2"><Svg w={18}><path d="M1.500 2.500h15v11h-15z" stroke="#79bdf7" strokeWidth="2" strokeDasharray="4 2" /></Svg></IconButton>
      <Caret up className="ml-1 text-white" />
      <span className="ml-[5px] h-6 w-px bg-[#7f9cb6]" />
      <IconButton label="Spin" className="ml-1"><SpinIcon color="#79bdf7" /></IconButton>
      <Caret up className="ml-[5px] text-white" />
      <IconButton label="Pan" className="ml-[9px]"><PanIcon color="#79bdf7" /></IconButton>
      <IconButton label="Zoom" className="ml-2"><ZoomIcon color="#79bdf7" /></IconButton>
      <Caret up className="ml-1 text-white" />
      <IconButton label="Previous view" className="ml-[9px]"><Svg><path d="m0 12 3-6 1 2 11-5 1 3-10 5 2 2z" fill="#79bdf7" /></Svg></IconButton>
      <IconButton label="Next view" className="ml-2"><Svg><path d="m16 4-7 0 1 2L0 11l2 3 10-5 1 2z" fill="#4f8fc4" /></Svg></IconButton>
    </div>
  </footer>
);

/* ---------- Windows taskbar ---------- */

const AnsysIcon: React.FC<{ id: string }> = ({ id }) => (
  <Svg w={24} h={24}>
    <defs>
      <linearGradient id={id} x1="0" y1="0" x2="1" y2="1">
        <stop offset="0" stopColor="#fff27a" />
        <stop offset="1" stopColor="#f5a800" />
      </linearGradient>
      <clipPath id={`${id}-clip`}><rect width="24" height="24" rx="5" /></clipPath>
    </defs>
    <g clipPath={`url(#${id}-clip)`}>
      <rect width="24" height="24" fill={`url(#${id})`} />
      <path d="M7 0h10l7 24h-6L12 6 6 24H0z" fill="#231f20" />
      <path d="m12 6 5.500 18h-11z" fill="#fdb515" />
    </g>
  </Svg>
);

interface TaskProps extends ChildrenProps {
  label: string;
  width?: string;
  open?: boolean;
  active?: boolean;
}

const Task: React.FC<TaskProps> = ({ label, width = 'w-[49px]', open, active, children }) => (
  <button aria-label={label} className={`${width} flex h-full shrink-0 flex-col items-center ${active ? 'bg-[#3b3b3b]' : ''}`}>
    <span className="flex flex-1 items-center">{children}</span>
    <span className={`h-0.5 ${active ? 'w-full' : 'w-10'} ${open ? 'bg-[#83b9f5]' : 'bg-transparent'}`} />
  </button>
);

const Taskbar = () => (
  <nav aria-label="Taskbar" className="flex h-10 shrink-0 bg-[#0a0a0a] pt-px text-white">
    <Task label="Start" width="w-12"><Svg><path d="m0 2.500 6.500-1v6H0zM7.500 1.500 16 0v7.500H7.500zM0 8.500h6.500v6l-6.500-1zM7.500 8.500H16V16l-8.500-1.500z" fill="#fff" /></Svg></Task>
    <Task label="Cortana" width="w-12"><Svg><circle cx="8" cy="8" r="6.500" stroke="#fff" strokeWidth="2" /></Svg></Task>
    <Task label="Task view" width="w-12"><Svg><path d="M.5 0v3.500h10V0M.5 5.500h10v5H.5zM.5 16v-3.500h10V16M14.500 0v16" stroke="#fff" /><path d="M13 5h3v4h-3z" fill="#fff" /></Svg></Task>
    <Task label="Pinwheel" width="w-[53px]">
      <Svg w={22} h={22}>
        <g fill="#e6e6e6">
          <rect x="1" y="1" width="11" height="10" rx="5" />
          <rect x="11" y="1" width="10" height="11" rx="5" />
          <rect x="10" y="11" width="11" height="10" rx="5" />
          <rect x="1" y="10" width="10" height="11" rx="5" />
          <circle cx="11" cy="11" r="4" />
        </g>
        <path d="M11 11c-3-3-2-7 1-10M11 11c3-3 7-2 10 1M11 11c3 3 2 7-1 10M11 11c-3 3-7 2-10-1" stroke="#0a0a0a" strokeWidth="1.500" />
      </Svg>
    </Task>
    <Task label="Edge" width="w-[52px]"><Svg w={22} h={22}><path d="M1 10C2 4 6 1 11 1c6 0 9 4 9 9v3H8c0 5 7 6 11 3v4c-6 3-15 2-15-6 0-4 2-6 5-7-3 0-6 1-8 3zm7-1h7c0-5-6-5-7 0z" fill="#0a7bdc" /></Svg></Task>
    <Task label="Microsoft Store">
      <Svg w={24} h={24}>
        <path d="M0 7h24v14c0 1-1 2-2 2H2c-1 0-2-1-2-2z" fill="#fff" />
        <path d="M8 7c0-8 8-8 8 0" stroke="#fff" strokeWidth="1.500" />
        <path d="M6 10h5v5H6z" fill="#f25022" /><path d="M12 10h5v5h-5z" fill="#7fba00" />
        <path d="M6 16h5v5H6z" fill="#00a4ef" /><path d="M12 16h5v5h-5z" fill="#ffb900" />
      </Svg>
    </Task>
    <Task label="File Explorer" open><Svg w={22} h={20}><path d="M1 1h8l1 2h11v16H1z" fill="#ffe08a" /><path d="M1 1h8l1 2H1z" fill="#e8b02c" /><path d="M4 19v-8h14v8h-4v-4H8v4z" fill="#37a6e0" /></Svg></Task>
    <Task label="Chrome" open>
      <Svg w={24} h={24}>
        <circle cx="12" cy="12" r="11" fill="#fdd23a" />
        <path d="M2.500 6.500a11 11 0 0 1 19 0L12 7.500l-4.500 7z" fill="#dd4b3e" />
        <path d="M2.500 6.500a11 11 0 0 0 9 16.500l5-8.500-9 0z" fill="#1da362" />
        <circle cx="12" cy="12" r="5" fill="#fff" /><circle cx="12" cy="12" r="4" fill="#4688f4" />
      </Svg>
    </Task>
    <Task label="Messenger"><Svg w={20} h={24}><path d="M4 0h12c3 0 4 1 4 4v12c0 3-1 4-4 4l-1 4-5-4H4c-3 0-4-1-4-4V4c0-3 1-4 4-4z" fill="#0c8bf7" /><path d="M10 10V3M10 10 4 8M10 10l6-2M10 10l-4 6M10 10l4 6" stroke="#fff" strokeWidth="2.500" /></Svg></Task>
    <Task label="Youdao"><span className="flex size-6 items-center justify-center rounded bg-[#e21b1b] font-['Noto_Sans_CJK_SC',sans-serif] text-[11px] font-bold leading-none">有道</span></Task>
    <Task label="WeChat">
      <Svg w={24} h={22}>
        <path d="M8.500 2C3 2 0 5 0 8.500c0 2 1 4 3 5L2 16l3-1.500c6 2 12-1 12-6S13 2 8.500 2z" fill="#7bd13f" />
        <path d="M17 8c-4 0-7 2.500-7 6s4 6 9 5l3 1.500-1-2.500c2-1 3-2.500 3-4 0-3.500-3-6-7-6z" fill="#f2f2f2" />
        <g fill="#333"><circle cx="6" cy="6.500" r="1" /><circle cx="11" cy="6.500" r="1" /><circle cx="15" cy="12" r="1" /><circle cx="19.500" cy="12" r="1" /></g>
      </Svg>
    </Task>
    <Task label="Workbench" open><AnsysIcon id="wb" /></Task>
    <Task label="SpaceClaim" open active><AnsysIcon id="sc" /></Task>

    <div className="ml-auto flex items-center bg-linear-to-r from-[#0a0a0a] via-[#122005] to-[#0a0f05] pl-[60px]">
      <IconButton label="Show hidden icons"><Svg w={12} h={8}><path d="m1 7 5-5 5 5" stroke="#fff" strokeWidth="1.500" /></Svg></IconButton>
      <Svg w={17} h={16} className="ml-[10px]"><circle cx="8" cy="8" r="8" fill="#3fa01a" /><path d="M1 12A8 8 0 0 1 13 2c2 2 3 4 2 7-3-4-6-5-8-2s-3 6-6 5z" fill="#ffe02a" /><path d="M8 4v8M4 8h8" stroke="#2a7a10" strokeWidth="4" /><path d="M8 5v6M5 8h6" stroke="#fff" strokeWidth="2" /></Svg>
      <Svg w={17} h={14} className="ml-[7px]"><path d="M5.500 4.500h10v7H4M16 7v2" stroke="#fff" /><path d="M7 6h7v4H7z" fill="#fff" /><path d="M1 1v2M4 1v2M0 3h5v3H0zM2.500 6v6H5" stroke="#fff" /></Svg>
      <Svg w={14} h={14} className="ml-2"><path d="M1 13C1 6 6 1 13 1M4 13c0-5 4-9 9-9M7 13c0-3 3-6 6-6" stroke="#aaa" strokeWidth="1.500" /><path d="M10 13v-3h3v3z" fill="#fff" /></Svg>
      <Svg w={17} h={14} className="ml-[7px]"><path d="M1 4.500h3l3-3v11l-3-3H1z" stroke="#fff" /><path d="M9 4c2 2 2 4 0 6" stroke="#fff" /><path d="M11 2c4 3 4 7 0 10M13 1c4 4 4 8 0 12" stroke="#888" /></Svg>
      <span className="ml-2 font-['Noto_Sans_CJK_SC',sans-serif] text-[13px]">中</span>
      <span className="ml-[13px] flex size-[15px] items-center justify-center rounded-sm bg-[#ef4a1e] text-[13px] font-black leading-none">S</span>
      <time className="ml-5 w-[54px] text-center font-['Open_Sans',sans-serif] text-xs leading-[19px]">21:17<br />2019/3/7</time>
      <IconButton label="Notifications" className="ml-[22px]"><Svg w={17} h={17}><path d="M.5 1.500h15v11H10l-2 3v-3H.5z" stroke="#fff" /></Svg></IconButton>
      <span className="ml-5 mr-[3px] h-full w-px bg-[#5c5c5c]" />
    </div>
  </nav>
);

const App = () => (
  <div className="relative flex h-screen flex-col overflow-hidden bg-[#f7f7fc] font-['Liberation_Sans',sans-serif] text-[11px] text-black">
    <Header />
    <Ribbon />
    <div className="flex min-h-0 flex-1">
      <aside className="flex w-[241px] shrink-0 flex-col pl-0.5 pr-[3px]">
        <GroupsPanel />
        <OptionsPanel />
        <PropertiesPanel />
      </aside>
      <Viewport />
    </div>
    <StatusBar />
    <Taskbar />
    <div className="absolute -right-[30px] bottom-28 flex size-12 items-center rounded-full border-2 border-[#e6e6e6] bg-[#ff8a1f] pl-[3px] text-[11px] font-bold text-white shadow-md ring-1 ring-[#b9b9b9]">
      88
    </div>
  </div>
);

export default App;
